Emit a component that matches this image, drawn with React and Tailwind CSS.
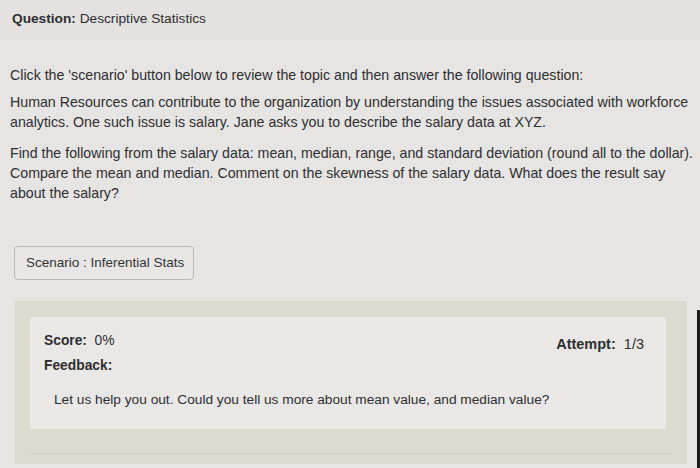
export default function App() {
  return (
    <div
      className="relative w-[700px] h-[468px] overflow-hidden bg-[#e7e5e4] text-[#2e2e30]"
      style={{ fontFamily: '"Liberation Sans", Arial, sans-serif' }}
    >
      <div className="h-[40px] pl-[12px] pt-[10px] text-[13.7px] leading-[18px] bg-[#e4e1e1]">
        <span className="font-bold">Question:</span> Descriptive Statistics
      </div>
      <div className="pl-[10px] pr-[4px] pt-[25px] text-[14.2px] leading-[20px]">
        <p>Click the 'scenario' button below to review the topic and then answer the following question:</p>
        <p className="mt-[7px]">
          Human Resources can contribute to the organization by understanding the issues associated with workforce analytics. One such issue is salary. Jane asks you to describe the salary data at XYZ.
        </p>
        <p className="mt-[11px]">
          Find the following from the salary data: mean, median, range, and standard deviation (round all to the dollar). Compare the mean and median. Comment on the skewness of the salary data. What does the result say about the salary?
        </p>
      </div>
      <div className="pl-[14px] mt-[43px]">
        <button className="w-[180px] h-[34px] rounded-[4px] border border-[#b9b8b6] bg-[#e8e7e5] text-left pl-[11px] text-[13.5px] text-[#333]">
          Scenario : Inferential Stats
        </button>
      </div>
      <div className="ml-[15px] mt-[21px] w-[672px] h-[163px] bg-[#dddbd0] pt-[16px] pl-[15px]">
        <div className="w-[636px] h-[112px] bg-[#e9e8e6] pl-[14px] pr-[22px] pt-[15px] text-[13.8px]">
          <div className="flex justify-between items-start">
            <div className="leading-[18px]">
              <span className="font-bold">Score:</span>&nbsp; 0%
            </div>
            <div className="mt-[3px] leading-[18px] text-[14.5px]">
              <span className="font-bold">Attempt:</span>&nbsp; 1/3
            </div>
          </div>
          <div className="mt-[4px] font-bold leading-[18px]">Feedback:</div>
          <div className="mt-[16px] pl-[10px] text-[13.7px] leading-[18px]">
            Let us help you out. Could you tell us more about mean value, and median value?
          </div>
        </div>
        <div className="mt-[24px] mr-[15px] h-px bg-[#d2d0c4]" />
      </div>
      <div className="absolute right-0 top-[310px] w-[3px] h-[158px] bg-[#1b1b1b]" />
    </div>
  );
}
